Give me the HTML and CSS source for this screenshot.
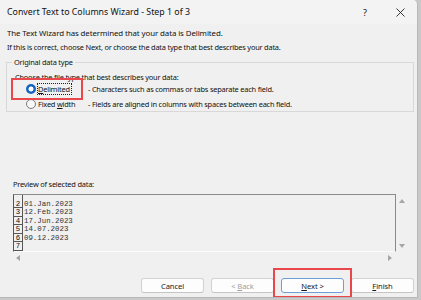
FILE: index.html
```html
<!DOCTYPE html>
<html lang="en">
<head>
<meta charset="utf-8">
<title>Convert Text to Columns Wizard</title>
<link rel="stylesheet" href="styles.css">
</head>
<body>
<div class="dialog">
  <div class="titlebar">
    <span class="title">Convert Text to Columns Wizard - Step 1 of 3</span>
    <span class="tb-help">?</span>
    <span class="tb-close"><svg width="9" height="9" viewBox="0 0 9 9"><path d="M0.5 0.5L8.5 8.5M8.5 0.5L0.5 8.5" stroke="#222" stroke-width="0.9" fill="none"/></svg></span>
  </div>
  <p class="line l1">The Text Wizard has determined that your data is Delimited.</p>
  <p class="line">If this is correct, choose Next, or choose the data type that best describes your data.</p>
  <fieldset class="group">
    <legend class="legend">Original data type</legend>
    <div class="choose">Choose the file type that best describes your data:</div>
    <div class="options">
      <div class="opt">
        <span class="radio on"></span>
        <span class="lab"><span class="focus"><u>D</u>elimited</span></span>
        <span class="desc">- Characters such as commas or tabs separate each field.</span>
      </div>
      <div class="opt">
        <span class="radio"></span>
        <span class="lab">Fixed <u>w</u>idth</span>
        <span class="desc">- Fields are aligned in columns with spaces between each field.</span>
      </div>
      <div class="mark mark-delim"></div>
    </div>
  </fieldset>
  <div class="plabel">Preview of selected data:</div>
  <div class="preview">
    <div class="pbox">
      <div class="nums">
        <div class="n">2</div><div class="n">3</div><div class="n">4</div><div class="n">5</div><div class="n">6</div><div class="n">7</div>
      </div>
      <div class="data">
        <div class="d">01.Jan.2023</div><div class="d">12.Feb.2023</div><div class="d">17.Jun.2023</div><div class="d">14.07.2023</div><div class="d">09.12.2023</div><div class="d"></div>
      </div>
    </div>
    <div class="vscroll">
      <span class="arr up"></span>
      <span class="arr down"></span>
    </div>
    <div class="hscroll">
      <span class="arr left"></span>
      <span class="arr right"></span>
    </div>
  </div>
  <div class="buttons">
    <button class="btn">Cancel</button>
    <button class="btn dis">&lt; <u>B</u>ack</button>
    <div class="btnwrap">
      <button class="btn def"><u>N</u>ext &gt;</button>
      <div class="mark mark-next"></div>
    </div>
    <button class="btn"><u>F</u>inish</button>
  </div>
</div>
</body>
</html>
```
FILE: styles.css
```css
html, body {
  margin: 0;
  padding: 0;
  background: #c9c9c9;
  width: 421px;
  height: 300px;
  overflow: hidden;
}
body {
  font-family: "Noto Sans", "Open Sans", sans-serif;
  font-size: 7.4px;
  letter-spacing: -0.2px;
  color: #111;
}
.dialog {
  width: 418px;
  height: 298px;
  background: #f0f0f0;
  box-sizing: border-box;
  border-right: 1px solid #b8b8b8;
  border-bottom: 1px solid #b8b8b8;
  border-top-right-radius: 5px;
  overflow: hidden;
}
.titlebar {
  height: 24px;
  display: flex;
  align-items: center;
  padding-left: 7px;
  background: #f3f3f3;
}
.title {
  font-size: 8.8px;
  letter-spacing: 0;
  flex: 1;
}
.tb-help {
  font-size: 9px;
  width: 10px;
  margin-right: 23px;
}
.tb-close {
  display: flex;
  width: 9px;
  margin-right: 12px;
}
.line {
  margin: 0;
  padding-left: 7px;
  line-height: 14px;
  height: 14px;
  white-space: nowrap;
}
.l1 {
  margin-top: 2px;
  font-size: 7.9px;
  letter-spacing: -0.1px;
}
.group {
  margin: 2px 0 0 6px;
  width: 408px;
  box-sizing: border-box;
  border: 1px solid #d8d8d8;
  padding: 0 0 1px 8px;
  min-width: 0;
}
.legend {
  margin-left: -3px;
  padding: 0 2px;
  line-height: 12px;
  height: 12px;
}
.choose {
  margin-top: 4px;
  line-height: 11px;
  height: 11px;
}
.options {
  position: relative;
  display: grid;
  row-gap: 3px;
}
.opt {
  display: grid;
  grid-template-columns: 10px 48px auto;
  column-gap: 2px;
  align-items: center;
  height: 12px;
  margin-left: 11px;
  white-space: nowrap;
}
.radio {
  width: 10px;
  height: 10px;
  box-sizing: border-box;
  border-radius: 50%;
  border: 1px solid #7a7a7a;
  background: #f7f7f7;
}
.radio.on {
  border: none;
  background: radial-gradient(circle, #ffffff 0 2.2px, #1364c4 2.8px);
}
.lab { line-height: 12px; }
.focus {
  outline: 1px dotted #222;
  outline-offset: 0;
  padding: 0 1px 0 0;
}
.desc { line-height: 12px; }
.mark {
  position: absolute;
  border: 2px solid #e9474c;
  box-sizing: border-box;
  pointer-events: none;
}
.mark-delim {
  left: -4px;
  top: -5px;
  width: 72px;
  height: 22px;
}
.plabel {
  margin: 66px 0 0 13px;
  line-height: 12px;
  height: 12px;
}
.preview {
  margin: 4px 0 0 13px;
  display: grid;
  grid-template-columns: 383px 12px;
  grid-template-rows: 58px 12px;
}
.pbox {
  border-top: 1px solid #8a8a8a;
  border-left: 1px solid #555;
  border-right: 1px solid #8a8a8a;
  border-bottom: 1px solid #fbfbfb;
  display: flex;
  box-sizing: border-box;
  overflow: hidden;
}
.nums {
  width: 8px;
  border-right: 1px solid #555;
  padding-top: 4.5px;
}
.n {
  height: 8.6px;
  line-height: 8.6px;
  font-family: "Liberation Mono", monospace;
  font-size: 7.4px;
  letter-spacing: 0;
  text-align: center;
  border-bottom: 1px solid #555;
  box-sizing: border-box;
}
.data { padding-top: 4.5px; }
.d {
  height: 8.6px;
  line-height: 8.6px;
  font-family: "Liberation Mono", monospace;
  font-size: 7.4px;
  letter-spacing: 0;
  padding-left: 1px;
  color: #333;
}
.vscroll {
  display: flex;
  flex-direction: column;
  justify-content: space-between;
  align-items: center;
  padding: 5px 0 4px;
}
.hscroll {
  display: flex;
  justify-content: space-between;
  align-items: center;
  padding: 0 4px 0 3px;
}
.arr {
  width: 0;
  height: 0;
  border: 0 solid transparent;
}
.up { border-width: 0 3px 4px; border-bottom-color: #a6a6a6; }
.down { border-width: 4px 3px 0; border-top-color: #a6a6a6; }
.left { border-width: 3px 4px 3px 0; border-right-color: #a6a6a6; }
.right { border-width: 3px 0 3px 4px; border-left-color: #a6a6a6; }
.buttons {
  margin-top: 14px;
  display: flex;
  justify-content: flex-end;
  gap: 7px;
  padding-right: 3px;
}
.btn {
  width: 63px;
  height: 15px;
  padding: 0;
  margin: 0;
  font-family: inherit;
  font-size: 7.6px;
  letter-spacing: -0.1px;
  color: #1a1a1a;
  background: #fdfdfd;
  border: 1px solid #d2d2d2;
  border-bottom-color: #c4c4c4;
  border-radius: 3px;
}
.btn.dis { color: #a0a0a0; }
.btn.def { border-color: #6d9fd6; }
.btnwrap { position: relative; display: flex; }
.mark-next {
  left: -8px;
  top: -10px;
  width: 79px;
  height: 30px;
}
```
